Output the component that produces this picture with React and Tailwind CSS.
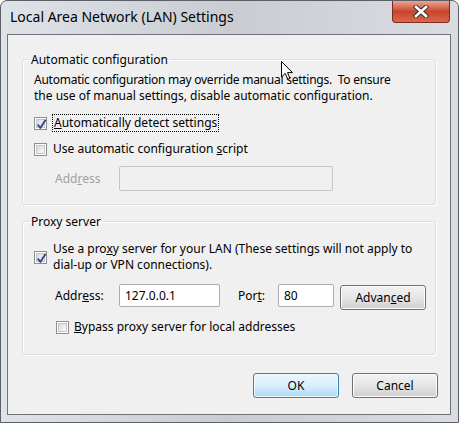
import React from "react";

const font = { fontFamily: '"Noto Sans", "Open Sans", sans-serif' };

function Checkbox({ checked }) {
  return (
    <span className="flex h-[13px] w-[13px] shrink-0 items-center justify-center border border-[#8f8f8f] bg-white p-[1px]">
      <span className="relative flex h-full w-full items-center justify-center border border-[#c6c6c6] bg-gradient-to-br from-[#d9d9d9] to-[#fbfbfb]">
        {checked && (
          <svg viewBox="0 0 10 10" className="absolute -left-[1px] -top-[2px] h-[12px] w-[11px]">
            <path d="M1.5 5.5 L4 8.5 L8.8 1.2" fill="none" stroke="#3a4f8a" strokeWidth="1.8" strokeLinejoin="round" />
          </svg>
        )}
      </span>
    </span>
  );
}

function Btn({ children, primary, className = "" }) {
  return (
    <button
      className={`flex h-[25px] items-center justify-center rounded-[3px] border text-[12px] text-black ${
        primary
          ? "border-[#3c7fb1] bg-gradient-to-b from-[#eaf6fd] via-[#d9f0fc] to-[#a7d9f5] shadow-[inset_0_0_0_1px_#f2fafe]"
          : "border-[#707070] bg-gradient-to-b from-[#f2f2f2] via-[#e6e6e6] to-[#cfcfcf] shadow-[inset_0_0_0_1px_#fcfcfc]"
      } ${className}`}
    >
      {children}
    </button>
  );
}

function Group({ title, children, className = "" }) {
  return (
    <fieldset className={`mx-[14px] rounded-[3px] border border-[#d5dfe5] p-0 shadow-[inset_1px_1px_0_#fff,1px_1px_0_#fff] ${className}`}>
      <legend className="ml-[6px] px-[2px] leading-[15px]">{title}</legend>
      {children}
    </fieldset>
  );
}

export default function App() {
  return (
    <div className="h-[423px] w-[459px] bg-white" style={font}>
      <div className="relative flex h-[423px] w-[459px] flex-col overflow-hidden rounded-t-[7px] border border-[#5b6068] bg-gradient-to-r from-[#dfe3e8] via-[#c9cdd2] to-[#d9dce0] text-black">
        {/* title bar */}
        <div className="flex h-[33px] items-center pl-[9px] text-[14px] leading-none text-black">
          <span className="-mt-[2px]">Local Area Network (LAN) Settings</span>
        </div>
        <div className="absolute right-[8px] top-0 flex h-[22px] w-[58px] items-center justify-center rounded-b-[4px] border border-t-0 border-[#7d2b20] bg-gradient-to-b from-[#eba593] via-[#c9442c] to-[#d8674b]">
          <svg viewBox="0 0 18 13" className="h-[13px] w-[18px]">
            <path d="M4 2 L14 11 M14 2 L4 11" stroke="#3b3b3b" strokeWidth="4.6" strokeLinecap="square" />
            <path d="M4 2 L14 11 M14 2 L4 11" stroke="#ffffff" strokeWidth="2.6" strokeLinecap="square" />
          </svg>
        </div>

        {/* client area */}
        <div className="ml-[6px] mr-[7px] flex h-[381px] flex-col border border-[#6d737b] bg-[#f0f0f0] text-[12px]">
          <Group title="Automatic configuration" className="mt-[17px] pb-[13px]">
            <p className="mt-[5px] pl-[11px] leading-[16px]">
              <span className="tracking-[-0.25px]">
                Automatic configuration may override manual settings.&nbsp; To ensure
              </span>
              <br />
              the use of manual settings, disable automatic configuration.
            </p>
            <div className="mt-[9px] flex h-[20px] items-center pl-[11px]">
              <Checkbox checked />
              <span className="ml-[5px] border border-dotted border-black px-[1px] leading-[16px]">
                <u>A</u>utomatically detect settings
              </span>
            </div>
            <div className="mt-[6px] flex h-[20px] items-center pl-[11px]">
              <Checkbox />
              <span className="ml-[6px] leading-[16px]">
                Use automatic configuration <u>s</u>cript
              </span>
            </div>
            <div className="mt-[7px] flex h-[25px] items-center pl-[32px]">
              <span className="w-[64px] text-[#a0a0a0]">
                Add<u>r</u>ess
              </span>
              <span className="h-[25px] w-[214px] rounded-[2px] border border-[#c3c7cc] bg-[#f0f0f0]" />
            </div>
          </Group>

          <Group title="Proxy server" className="mt-[9px] pb-[17px]">
            <div className="mt-[12px] flex items-center pl-[11px]">
              <Checkbox checked />
              <span className="ml-[6px] leading-[16px]">
                Use a pro<u>x</u>y server for your LAN (These settings will not apply to
                <br />
                dial-up or VPN connections).
              </span>
            </div>
            <div className="mt-[11px] flex items-start pl-[32px]">
              <span className="w-[64px] leading-[23px]">
                Addr<u>e</u>ss:
              </span>
              <span className="flex h-[23px] w-[101px] items-center rounded-[2px] border border-[#abadb3] bg-white pl-[5px]">
                127.0.0.1
              </span>
              <span className="ml-[18px] w-[40px] leading-[23px]">
                Por<u>t</u>:
              </span>
              <span className="flex h-[23px] w-[56px] items-center rounded-[2px] border border-[#abadb3] bg-white pl-[5px]">
                80
              </span>
              <Btn className="ml-[6px] mt-[1px] w-[86px]">
                Advan<u>c</u>ed
              </Btn>
            </div>
            <div className="mt-[7px] flex h-[20px] items-center pl-[33px]">
              <Checkbox />
              <span className="ml-[5px] leading-[16px]">
                <u>B</u>ypass proxy server for local addresses
              </span>
            </div>
          </Group>

          <div className="mr-[12px] mt-[18px] flex justify-end gap-[13px]">
            <Btn primary className="w-[86px]">OK</Btn>
            <Btn className="w-[86px]">Cancel</Btn>
          </div>
        </div>

        {/* mouse cursor */}
        <svg viewBox="0 0 12 19" className="absolute left-[280px] top-[60px] h-[19px] w-[12px]">
          <path d="M0.5 0.5 L0.5 16 L4.2 12.4 L6.8 18.3 L9 17.3 L6.5 11.6 L11.5 11.6 Z" fill="#fff" stroke="#000" strokeWidth="1" strokeLinejoin="round" />
        </svg>
      </div>
    </div>
  );
}
